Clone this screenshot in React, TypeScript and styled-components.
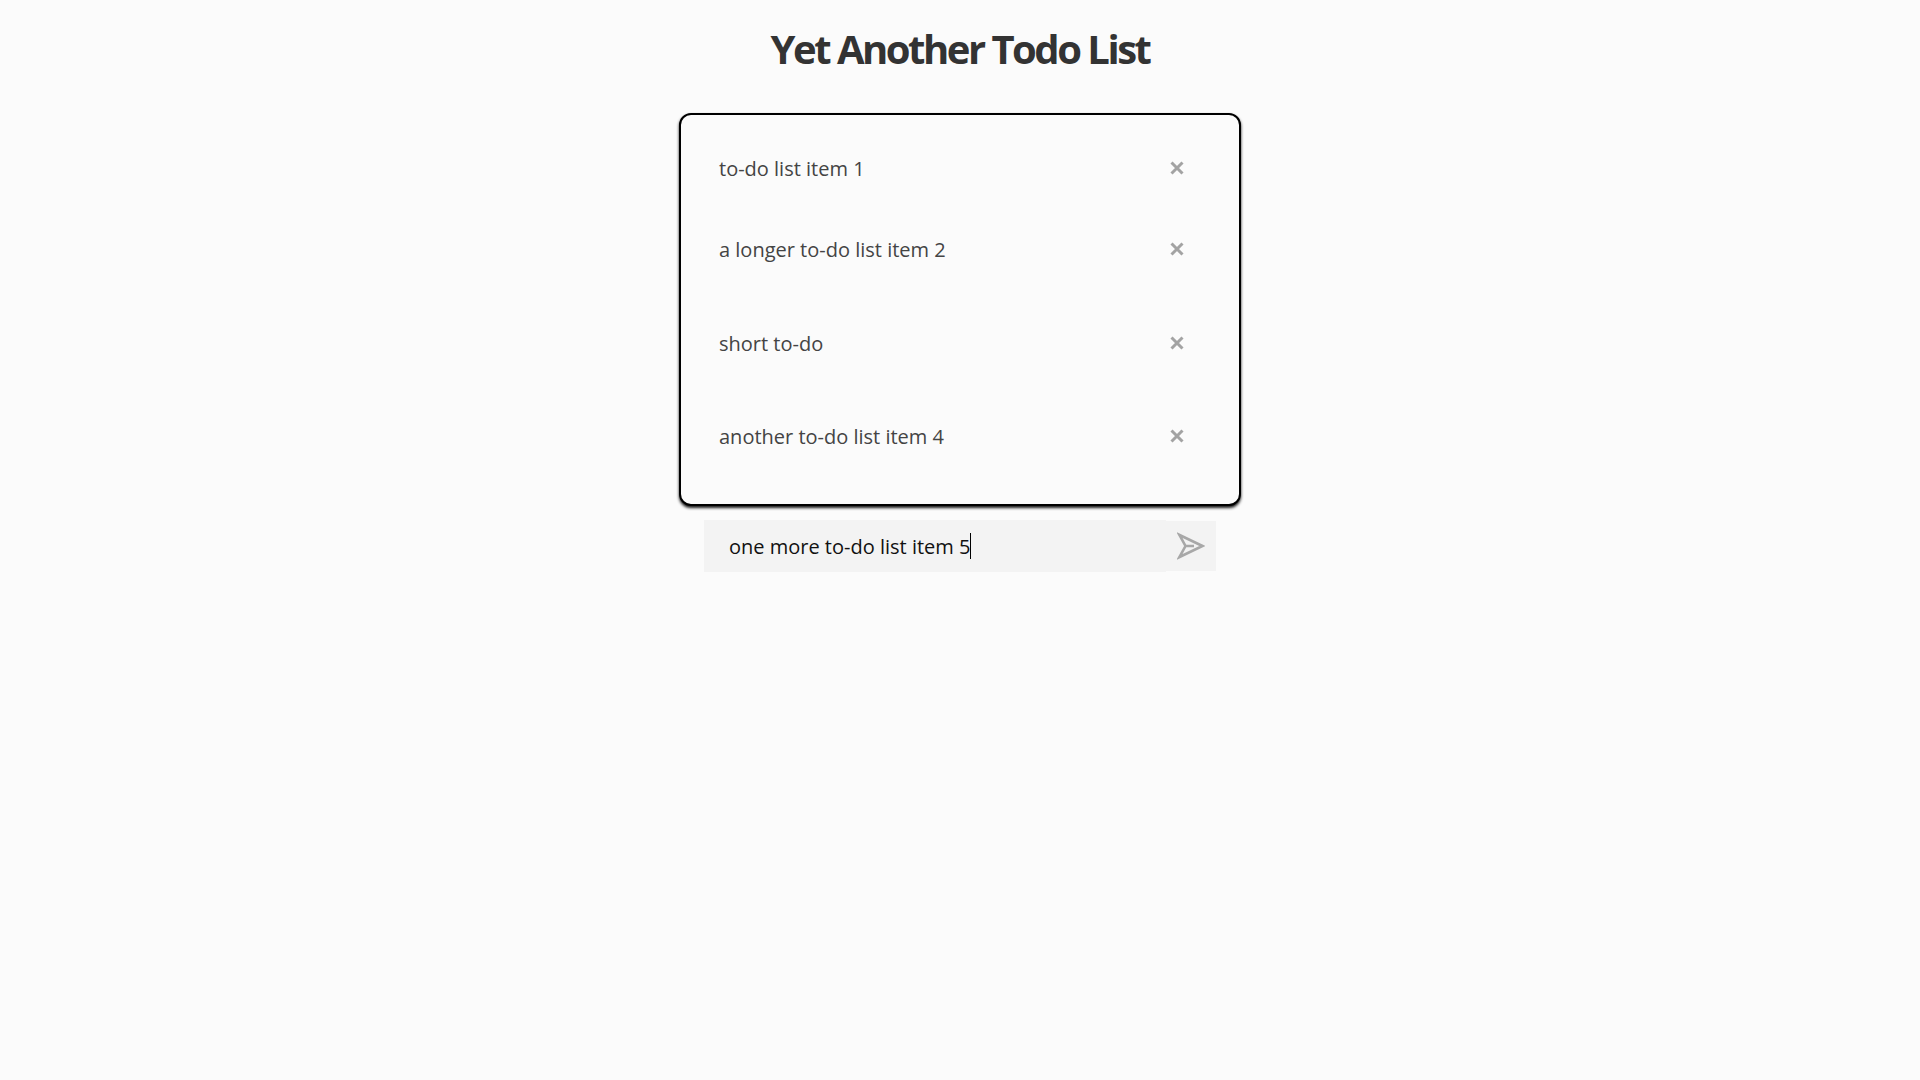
import React from 'react';
import styled, { createGlobalStyle } from 'styled-components';

const GlobalStyle = createGlobalStyle`
  html, body {
    margin: 0;
    padding: 0;
    background: #fbfbfb;
    font-family: 'Open Sans', sans-serif;
  }
`;

const Page = styled.main`
  display: flex;
  flex-direction: column;
  align-items: center;
  min-height: 100vh;
`;

const Title = styled.h1`
  margin: 22px 0 0;
  height: 54px;
  line-height: 54px;
  font-size: 40px;
  font-weight: 700;
  letter-spacing: -2.5px;
  color: #333;
`;

const Card = styled.section`
  box-sizing: border-box;
  width: 562px;
  height: 393px;
  margin-top: 37px;
  padding: 33px 38px 0;
  background: #fbfbfb;
  border: 2px solid #000;
  border-radius: 12px;
  box-shadow: 0 2px 3px rgba(0, 0, 0, 0.9);
`;

const List = styled.ul`
  margin: 0;
  padding: 0;
  list-style: none;
`;

const Row = styled.li<{ $gap: number }>`
  display: flex;
  align-items: center;
  justify-content: space-between;
  height: 40px;
  margin-top: ${(props) => props.$gap}px;
`;

const Label = styled.span`
  font-size: 20px;
  font-weight: 400;
  color: #444;
`;

const Remove = styled.button`
  display: flex;
  align-items: center;
  justify-content: center;
  width: 20px;
  height: 20px;
  margin-right: 14px;
  padding: 0;
  border: 0;
  background: none;
  color: #a3a3a3;
`;

const Composer = styled.form`
  display: flex;
  align-items: center;
  width: 512px;
  margin-top: 14px;
`;

const Field = styled.div`
  box-sizing: border-box;
  display: flex;
  align-items: center;
  width: 462px;
  height: 52px;
  padding-left: 25px;
  background: #f3f3f3;
  font-size: 20px;
  color: #111;
`;

const Caret = styled.span`
  width: 1px;
  height: 26px;
  background: #000;
`;

const Send = styled.button`
  display: flex;
  align-items: center;
  justify-content: center;
  width: 50px;
  height: 50px;
  padding: 0;
  border: 0;
  background: #f3f3f3;
`;

const items = [
  { text: 'to-do list item 1', gap: 0 },
  { text: 'a longer to-do list item 2', gap: 41 },
  { text: 'short to-do', gap: 54 },
  { text: 'another to-do list item 4', gap: 53 },
];

export default function App() {
  return (
    <>
      <GlobalStyle />
      <Page>
        <Title>Yet Another Todo List</Title>
        <Card>
          <List>
            {items.map((item) => (
              <Row key={item.text} $gap={item.gap}>
                <Label>{item.text}</Label>
                <Remove type="button">
                  <svg width="16" height="16" viewBox="0 0 16 16">
                    <path d="M2.5 2.5l11 11M13.5 2.5l-11 11" stroke="currentColor" strokeWidth="3" fill="none" />
                  </svg>
                </Remove>
              </Row>
            ))}
          </List>
        </Card>
        <Composer>
          <Field>
            one more to-do list item 5
            <Caret />
          </Field>
          <Send type="button">
            <svg width="28" height="28" viewBox="0 0 28 28">
              <path d="M25.5 14L2.5 3L8.5 14L2.5 25Z M8.5 14H17" stroke="#a8a8a8" strokeWidth="2.6" fill="none" />
            </svg>
          </Send>
        </Composer>
      </Page>
    </>
  );
}
